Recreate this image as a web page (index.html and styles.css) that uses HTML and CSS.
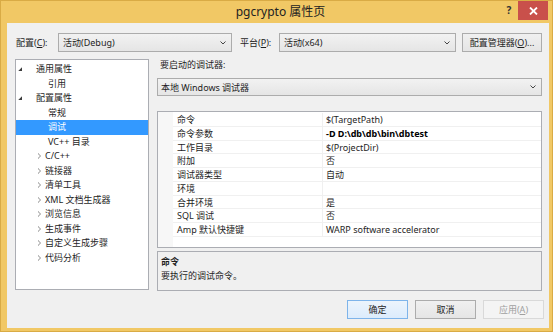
FILE: index.html
```html
<!DOCTYPE html>
<html lang="zh-CN">
<head>
    <meta charset="UTF-8">
    <meta name="viewport" content="width=device-width, initial-scale=1.0">
    <title>pgcrypto 属性页</title>
    <link rel="stylesheet" href="styles.css">
</head>
<body>
<div class="window">
    <div class="titlebar">
        <span class="title">pgcrypto 属性页</span>
        <span class="help">?</span>
        <span class="close">
            <svg width="9" height="8" viewBox="0 0 9 8"><path d="M1 0.5 L8 7.5 M8 0.5 L1 7.5" stroke="#fff" stroke-width="1.8"/></svg>
        </span>
    </div>
    <div class="client">
        <div class="toolbar">
            <span class="tb-label tb-label-config">配置(<u>C</u>):</span>
            <div class="combo combo-config">
                <span>活动(Debug)</span>
                <svg class="chev" width="6" height="4" viewBox="0 0 6 4"><path d="M0.5 0.5 L3 3 L5.5 0.5" fill="none" stroke="#444" stroke-width="1"/></svg>
            </div>
            <span class="tb-label tb-label-platform">平台(<u>P</u>):</span>
            <div class="combo combo-platform">
                <span>活动(x64)</span>
                <svg class="chev" width="6" height="4" viewBox="0 0 6 4"><path d="M0.5 0.5 L3 3 L5.5 0.5" fill="none" stroke="#444" stroke-width="1"/></svg>
            </div>
            <button class="btn btn-manager">配置管理器(<u>O</u>)...</button>
        </div>

        <div class="main">
            <ul class="tree">
                <li class="node lvl0"><span class="exp open"></span>通用属性</li>
                <li class="node lvl1 leaf">引用</li>
                <li class="node lvl0"><span class="exp open"></span>配置属性</li>
                <li class="node lvl1 leaf">常规</li>
                <li class="node lvl1 leaf selected">调试</li>
                <li class="node lvl1 leaf">VC++ 目录</li>
                <li class="node lvl1"><span class="exp closed"></span>C/C++</li>
                <li class="node lvl1"><span class="exp closed"></span>链接器</li>
                <li class="node lvl1"><span class="exp closed"></span>清单工具</li>
                <li class="node lvl1"><span class="exp closed"></span>XML 文档生成器</li>
                <li class="node lvl1"><span class="exp closed"></span>浏览信息</li>
                <li class="node lvl1"><span class="exp closed"></span>生成事件</li>
                <li class="node lvl1"><span class="exp closed"></span>自定义生成步骤</li>
                <li class="node lvl1"><span class="exp closed"></span>代码分析</li>
            </ul>

            <div class="pane">
                <div class="pane-label">要启动的调试器:</div>
                <div class="combo combo-debugger">
                    <span>本地 Windows 调试器</span>
                    <svg class="chev" width="6" height="4" viewBox="0 0 6 4"><path d="M0.5 0.5 L3 3 L5.5 0.5" fill="none" stroke="#444" stroke-width="1"/></svg>
                </div>
                <div class="grid">
                    <div class="row"><span class="name">命令</span><span class="value">$(TargetPath)</span></div>
                    <div class="row"><span class="name">命令参数</span><span class="value bold">-D D:\db\db\bin\dbtest</span></div>
                    <div class="row"><span class="name">工作目录</span><span class="value">$(ProjectDir)</span></div>
                    <div class="row"><span class="name">附加</span><span class="value">否</span></div>
                    <div class="row"><span class="name">调试器类型</span><span class="value">自动</span></div>
                    <div class="row"><span class="name">环境</span><span class="value"></span></div>
                    <div class="row"><span class="name">合并环境</span><span class="value">是</span></div>
                    <div class="row"><span class="name">SQL 调试</span><span class="value">否</span></div>
                    <div class="row"><span class="name">Amp 默认快捷键</span><span class="value">WARP software accelerator</span></div>
                </div>
                <div class="desc">
                    <div class="desc-title">命令</div>
                    <div class="desc-text">要执行的调试命令。</div>
                </div>
            </div>
        </div>

        <div class="actions">
            <button class="btn btn-default">确定</button>
            <button class="btn">取消</button>
            <button class="btn btn-disabled">应用(<u>A</u>)</button>
        </div>
    </div>
</div>
</body>
</html>
```

FILE: styles.css
```css
body {
    margin: 0;
    background-color: #fff;
    font-family: "Noto Sans", "Noto Sans CJK SC", sans-serif;
    font-size: 9px;
    color: #1e1e1e;
}

.window {
    width: 553px;
    height: 332px;
    box-sizing: border-box;
    background-color: #f1c865;
    border: 1px solid #d9ab45;
    display: flex;
    flex-direction: column;
}

.titlebar {
    height: 22px;
    display: flex;
    align-items: flex-start;
}

.title {
    flex: 1;
    padding-left: 57px;
    text-align: center;
    font-size: 12px;
    line-height: 21px;
    color: #222;
}

.help {
    width: 12px;
    font-size: 10px;
    font-weight: bold;
    line-height: 19px;
    color: #333;
    text-align: center;
    margin-right: 3px;
}

.close {
    width: 30px;
    height: 19px;
    margin-right: 4px;
    background-color: #c9504b;
    display: flex;
    align-items: center;
    justify-content: center;
}

.client {
    flex: 1;
    margin: 0 3px 3px 6px;
    background-color: #f0f0f0;
    padding: 10px 7px 0 8px;
    display: flex;
    flex-direction: column;
}

u {
    text-decoration: underline;
}

/* top row */
.toolbar {
    display: flex;
    align-items: center;
    height: 19px;
}

.tb-label {
    line-height: 19px;
}

.tb-label-config {
    width: 42px;
    margin-left: 1px;
}

.tb-label-platform {
    width: 39px;
    margin-left: 8px;
}

.combo {
    box-sizing: border-box;
    height: 19px;
    border: 1px solid #acacac;
    background: linear-gradient(#f2f2f2, #e5e5e5);
    display: flex;
    align-items: center;
    justify-content: space-between;
    padding: 0 5px 0 4px;
}

.combo-config {
    width: 174px;
}

.combo-platform {
    width: 177px;
}

.combo-debugger {
    width: 100%;
    height: 18px;
    margin-top: 7px;
    padding-left: 3px;
}

.btn {
    box-sizing: border-box;
    height: 19px;
    border: 1px solid #acacac;
    background: linear-gradient(#f0f0f0, #e5e5e5);
    font-family: inherit;
    font-size: 9px;
    color: #1e1e1e;
    padding: 0;
}

.btn-manager {
    width: 80px;
    margin-left: 6px;
}

/* tree + pane */
.main {
    display: flex;
    margin-top: 7px;
    height: 232px;
}

.tree {
    box-sizing: border-box;
    width: 134px;
    height: 231px;
    margin: 0;
    padding: 2px 0 0 0;
    list-style: none;
    background-color: #fff;
    border: 1px solid #abadb3;
}

.node {
    height: 14.5px;
    line-height: 14.5px;
    display: flex;
    align-items: center;
    white-space: nowrap;
}

.lvl0 {
    padding-left: 2px;
}

.lvl1 {
    padding-left: 22px;
}

.lvl1.leaf {
    padding-left: 32px;
}

.exp {
    width: 4px;
    height: 5px;
    margin-right: 14px;
}

.lvl1 .exp {
    margin-right: 6px;
}

.exp.open {
    background-color: #3c3c3c;
    clip-path: polygon(100% 0, 100% 100%, 0 100%);
    width: 4px;
    height: 4px;
}

.exp.closed {
    border-left: 1px solid #8a8a8a;
    width: 0;
    height: 0;
    border-top: 3px solid transparent;
    border-bottom: 3px solid transparent;
    position: relative;
}

.exp.closed::after {
    content: "";
    position: absolute;
    left: -1px;
    top: -3px;
    width: 0;
    height: 0;
    border-left: 3px solid #8a8a8a;
    border-top: 3px solid transparent;
    border-bottom: 3px solid transparent;
}

.exp.closed::before {
    content: "";
    position: absolute;
    left: -1px;
    top: -2px;
    width: 0;
    height: 0;
    border-left: 2px solid #fff;
    border-top: 2px solid transparent;
    border-bottom: 2px solid transparent;
    z-index: 1;
}

.selected {
    background-color: #3399ff;
    color: #fff;
}

.pane {
    flex: 1;
    margin-left: 8px;
    display: flex;
    flex-direction: column;
}

.pane-label {
    line-height: 12px;
    padding-left: 3px;
}

.grid {
    box-sizing: border-box;
    height: 137px;
    margin-top: 15px;
    padding-top: 1px;
    background-color: #fff;
    border: 1px solid #abadb3;
    background-image: linear-gradient(#f7f7f7, #f7f7f7);
    background-size: 15px 100%;
    background-repeat: no-repeat;
}

.row {
    display: flex;
    height: 13.75px;
    line-height: 13px;
    margin-left: 15px;
    box-sizing: border-box;
    border-bottom: 1px solid #f0f0f0;
}

.name {
    width: 150px;
    padding-left: 4px;
    box-sizing: border-box;
    border-right: 1px solid #f0f0f0;
}

.value {
    padding-left: 3px;
    white-space: nowrap;
    color: #1e1e1e;
}

.bold {
    font-weight: bold;
    color: #000;
}

.desc {
    box-sizing: border-box;
    height: 40px;
    margin-top: 3px;
    border: 1px solid #abadb3;
    background-color: #f0f0f0;
    padding: 3px 0 0 3px;
    line-height: 14px;
}

.desc-title {
    font-weight: bold;
}

/* bottom buttons */
.actions {
    display: flex;
    justify-content: flex-end;
    gap: 7px;
    margin-top: 9px;
    margin-right: -2px;
}

.actions .btn {
    width: 61px;
}

.btn-default {
    border-color: #7eb4ea;
    background: linear-gradient(#ecf4fc, #dcecfc);
}

.btn-disabled {
    background: #f4f4f4;
    border-color: #d9d9d9;
    color: #a0a0a0;
}
```
